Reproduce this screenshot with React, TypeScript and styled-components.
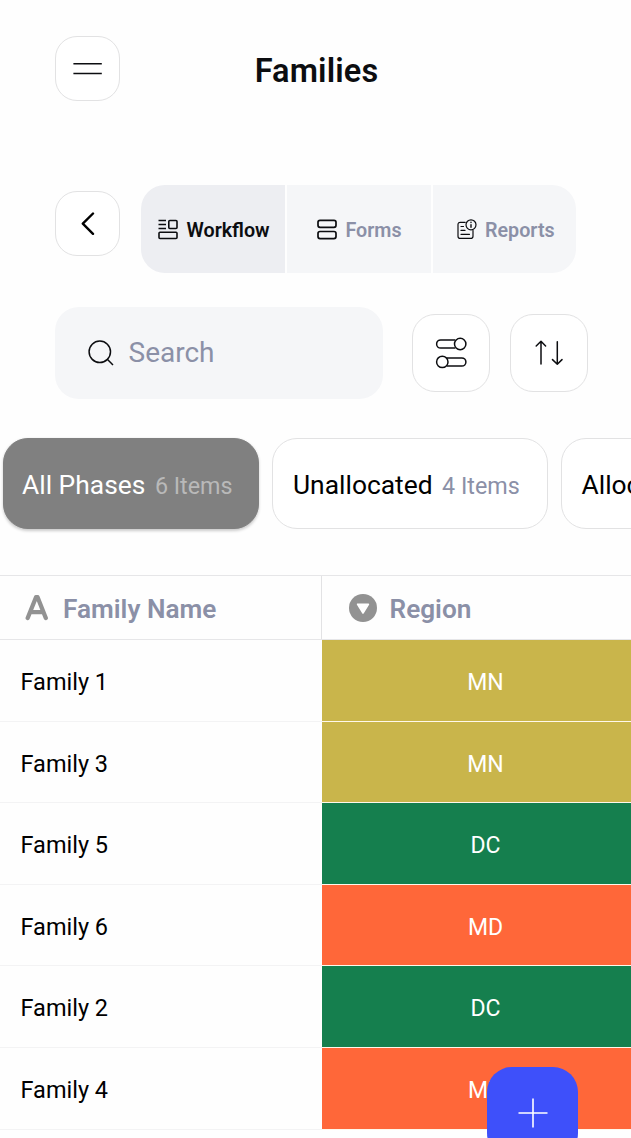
import React from "react";
import styled, { createGlobalStyle } from "styled-components";

const GlobalStyle = createGlobalStyle`
  *, *::before, *::after { box-sizing: border-box; }
  html, body { margin: 0; padding: 0; background: #fefefe; }
  body { font-family: Roboto, "Liberation Sans", sans-serif; color: #0c0d10; overflow: hidden; }
  button { font: inherit; color: inherit; padding: 0; margin: 0; }
  svg { display: block; flex: none; }
`;

const Screen = styled.main`
  position: relative;
  width: 100%;
  height: 1138px;
  overflow: hidden;
  display: flex;
  flex-direction: column;
`;

const IconButton = styled.button<{ $size: number; $radius: number }>`
  flex: none;
  width: ${(p) => p.$size}px;
  height: ${(p) => p.$size}px;
  border-radius: ${(p) => p.$radius}px;
  border: 1.5px solid #e2e2e3;
  background: #fff;
  display: flex;
  align-items: center;
  justify-content: center;
`;

const Header = styled.header`
  display: grid;
  grid-template-columns: 65px 1fr 65px;
  align-items: center;
  padding: 36px 53px 0 55px;
  height: 101px;
`;

const Title = styled.h1`
  margin: 5px 0 0;
  text-align: center;
  font-size: 32.5px;
  line-height: 40px;
  font-weight: 600;
  letter-spacing: 0.15px;
`;

const ViewBar = styled.div`
  display: flex;
  align-items: flex-start;
  gap: 21px;
  margin-top: 84px;
  padding-left: 55px;
`;

const BackSlot = styled.div`
  padding-top: 6px;
`;

const Tabs = styled.nav`
  display: flex;
  gap: 2px;
  width: 435px;
  height: 88px;
  border-radius: 24px;
  overflow: hidden;
`;

const Tab = styled.button<{ $active?: boolean; $width: number; $inset: number }>`
  flex: none;
  width: ${(p) => p.$width}px;
  border: 0;
  padding: 2px 0 0 ${(p) => p.$inset}px;
  display: flex;
  align-items: center;
  gap: 8.5px;
  background: ${(p) => (p.$active ? "#edeef2" : "#f5f6f8")};
  color: ${(p) => (p.$active ? "#0c0d10" : "#8b90a7")};
  font-size: 19.7px;
  font-weight: 600;
  white-space: nowrap;
`;

const TabIcon = styled.svg`
  color: #0c0d10;
  margin-bottom: 2px;
`;

const SearchBar = styled.div`
  display: flex;
  align-items: center;
  margin-top: 34px;
  padding-left: 55px;
`;

const SearchField = styled.label`
  display: flex;
  align-items: center;
  gap: 14.5px;
  width: 328px;
  height: 92px;
  margin-right: 29px;
  padding-left: 33px;
  border-radius: 24px;
  background: #f5f6f8;
`;

const SearchText = styled.span`
  color: #8b90a7;
  font-size: 28px;
  line-height: 34px;
`;

const SortSlot = styled.div`
  margin-left: 20px;
`;

const Phases = styled.div`
  display: flex;
  gap: 13px;
  margin-top: 39px;
  padding-left: 2.5px;
`;

const Phase = styled.button<{ $active?: boolean; $width: number }>`
  flex: none;
  width: ${(p) => p.$width}px;
  height: 91px;
  border-radius: 25px;
  border: 1px solid ${(p) => (p.$active ? "#808080" : "#e2e2e3")};
  background: ${(p) => (p.$active ? "#808080" : "#fff")};
  box-shadow: ${(p) => (p.$active ? "0 1.5px 3px rgba(0, 0, 0, 0.2)" : "none")};
  color: ${(p) => (p.$active ? "#fff" : "#000")};
  display: flex;
  align-items: baseline;
  gap: 9.5px;
  padding: 1px 0 0 ${(p) => (p.$active ? 18.5 : 20)}px;
  line-height: 90px;
  font-size: 26.4px;
  white-space: nowrap;
`;

const Count = styled.span<{ $active?: boolean }>`
  color: ${(p) => (p.$active ? "#b9b9b9" : "#8b90a7")};
  font-size: 23.3px;
`;

const Table = styled.section`
  display: flex;
  flex-direction: column;
  margin-top: 46px;
`;

const HeadRow = styled.div`
  display: grid;
  grid-template-columns: 322px 1fr;
  height: 65px;
  border-top: 1.5px solid #e6e6e8;
  border-bottom: 1.5px solid #e6e6e8;
`;

const HeadCell = styled.div<{ $inset: number; $gap: number; $divided?: boolean }>`
  display: flex;
  align-items: center;
  gap: ${(p) => p.$gap}px;
  padding-left: ${(p) => p.$inset}px;
  border-right: ${(p) => (p.$divided ? "1px solid #e2e2e4" : "0")};
  color: #8b90a7;
  font-size: 26.2px;
  font-weight: 600;
`;

const HeadLabel = styled.span`
  padding-top: 3px;
`;

const Row = styled.div`
  display: grid;
  grid-template-columns: 322px 1fr;
  height: 81.6px;
`;

const NameCell = styled.div`
  display: flex;
  align-items: center;
  padding: 3.6px 0 0 20.5px;
  border-bottom: 1px solid #f3f3f4;
  color: #000;
  font-size: 23.5px;
`;

const RegionCell = styled.div<{ $color: string }>`
  display: flex;
  align-items: center;
  justify-content: center;
  padding: 4.6px 0 0 18px;
  border-bottom: 1px solid #fff8ea;
  background: ${(p) => p.$color};
  background-clip: padding-box;
  color: #fff;
  font-size: 23px;
`;

const AddButton = styled.button`
  position: absolute;
  left: 487px;
  top: 1067px;
  width: 91px;
  height: 91px;
  border: 0;
  border-radius: 25px;
  background: #3e50fa;
  display: flex;
  align-items: center;
  justify-content: center;
`;

const regionColors: Record<string, string> = {
  MN: "#c9b54b",
  DC: "#157f4e",
  MD: "#ff6739",
};

const families = [
  { name: "Family 1", region: "MN" },
  { name: "Family 3", region: "MN" },
  { name: "Family 5", region: "DC" },
  { name: "Family 6", region: "MD" },
  { name: "Family 2", region: "DC" },
  { name: "Family 4", region: "MD" },
];

const phases = [
  { label: "All Phases", count: "6 Items", width: 256.5, active: true },
  { label: "Unallocated", count: "4 Items", width: 275.5 },
  { label: "Allocated", width: 246 },
];

const MenuIcon = () => (
  <svg width="30" height="14" fill="none" stroke="#0c0d10" strokeWidth="1.5">
    <path d="M.4 1.8H28.8M.4 11.6H28.8" />
  </svg>
);

const BackIcon = () => (
  <svg width="14" height="24" fill="none" stroke="#000" strokeWidth="2.4" strokeLinecap="round" strokeLinejoin="round">
    <path d="M12 1.5L1.8 11.6L12 21.8" />
  </svg>
);

const WorkflowIcon = () => (
  <TabIcon width="20" height="21" fill="none" stroke="currentColor" strokeWidth="1.6">
    <path d="M.5 1.5H8M.5 5.5H8M.5 9.5H8" />
    <rect x="10.8" y="1.5" width="8.2" height="8" rx="1" />
    <rect x="1" y="13.3" width="18" height="6.2" rx="1" />
  </TabIcon>
);

const FormsIcon = () => (
  <TabIcon width="20" height="21" fill="none" stroke="currentColor" strokeWidth="1.7">
    <rect x="1" y="1.3" width="18" height="7" rx="2" />
    <rect x="1" y="12.5" width="18" height="7.1" rx="2" />
  </TabIcon>
);

const ReportsIcon = () => (
  <TabIcon width="20" height="21" fill="none" stroke="currentColor" strokeWidth="1.2" strokeLinecap="round">
    <path d="M8.2 3.3H3.2C1.8 3.3 1 4.1 1 5.5V17.2C1 18.6 1.8 19.4 3.2 19.4H13.7C15.1 19.4 16 18.6 16 17.2V11.4" />
    <circle cx="14" cy="5.8" r="5" />
    <path d="M4 7.5H6.5M4 11.4H8M4 15.3H12.5" />
    <path d="M14 5.6V8.2M14 3.3V3.5" strokeWidth="1.4" />
  </TabIcon>
);

const SearchIcon = () => (
  <svg width="26" height="26" fill="none" stroke="#0c0d10" strokeWidth="1.5">
    <circle cx="11.8" cy="11.8" r="10.7" />
    <path d="M19.3 19.3L25 25" />
  </svg>
);

const FilterIcon = () => (
  <svg width="32" height="32" fill="none" stroke="#0c0d10" strokeWidth="1.5">
    <path d="M20.3 2.9H5.7a4.1 4.1 0 0 0 0 8.2H20.3" />
    <circle cx="25.2" cy="7" r="5.7" />
    <path d="M12 20.9H26.8a4.1 4.1 0 0 1 0 8.2H12" />
    <circle cx="7.3" cy="24.9" r="5.7" />
  </svg>
);

const SortIcon = () => (
  <svg width="28" height="26" fill="none" stroke="#0c0d10" strokeWidth="1.5" strokeLinecap="round" strokeLinejoin="round">
    <path d="M6 24V1.3M1.2 6L6 1.3L10.6 6" />
    <path d="M22.3 1.7V24.3M17.5 19.6L22.3 24.3L27 19.6" />
  </svg>
);

const TextTypeIcon = () => (
  <svg width="24" height="27" fill="none" stroke="#929292" strokeWidth="4.3" strokeLinecap="round" strokeLinejoin="round">
    <path d="M2.7 24L11 3.2H12.6L20.8 24M6 18.2H17.6" />
  </svg>
);

const SelectTypeIcon = () => (
  <svg width="28" height="30">
    <circle cx="14" cy="15" r="14" fill="#929292" />
    <path d="M8.6 11.3H19.4L14 20Z" fill="#fff" stroke="#fff" strokeWidth="1.6" strokeLinejoin="round" />
  </svg>
);

const PlusIcon = () => (
  <svg width="30" height="30" fill="none" stroke="#fff" strokeWidth="1.6">
    <path d="M.5 15H29.5M15 .5V29.5" />
  </svg>
);

export default function App() {
  return (
    <>
      <GlobalStyle />
      <Screen>
        <Header>
          <IconButton $size={65} $radius={22} aria-label="Menu">
            <MenuIcon />
          </IconButton>
          <Title>Families</Title>
        </Header>

        <ViewBar>
          <BackSlot>
            <IconButton $size={65} $radius={22} aria-label="Back">
              <BackIcon />
            </IconButton>
          </BackSlot>
          <Tabs>
            <Tab $active $width={144} $inset={17}>
              <WorkflowIcon />
              Workflow
            </Tab>
            <Tab $width={144} $inset={30}>
              <FormsIcon />
              Forms
            </Tab>
            <Tab $width={143} $inset={23.5}>
              <ReportsIcon />
              Reports
            </Tab>
          </Tabs>
        </ViewBar>

        <SearchBar>
          <SearchField>
            <SearchIcon />
            <SearchText>Search</SearchText>
          </SearchField>
          <IconButton $size={78} $radius={23} aria-label="Filter">
            <FilterIcon />
          </IconButton>
          <SortSlot>
            <IconButton $size={78} $radius={23} aria-label="Sort">
              <SortIcon />
            </IconButton>
          </SortSlot>
        </SearchBar>

        <Phases>
          {phases.map((p) => (
            <Phase key={p.label} $active={p.active} $width={p.width}>
              <span>{p.label}</span>
              {p.count && <Count $active={p.active}>{p.count}</Count>}
            </Phase>
          ))}
        </Phases>

        <Table>
          <HeadRow>
            <HeadCell $inset={25} $gap={14} $divided>
              <TextTypeIcon />
              <HeadLabel>Family Name</HeadLabel>
            </HeadCell>
            <HeadCell $inset={27} $gap={12.5}>
              <SelectTypeIcon />
              <HeadLabel>Region</HeadLabel>
            </HeadCell>
          </HeadRow>
          {families.map((f) => (
            <Row key={f.name}>
              <NameCell>{f.name}</NameCell>
              <RegionCell $color={regionColors[f.region]}>{f.region}</RegionCell>
            </Row>
          ))}
        </Table>

        <AddButton aria-label="Add">
          <PlusIcon />
        </AddButton>
      </Screen>
    </>
  );
}
